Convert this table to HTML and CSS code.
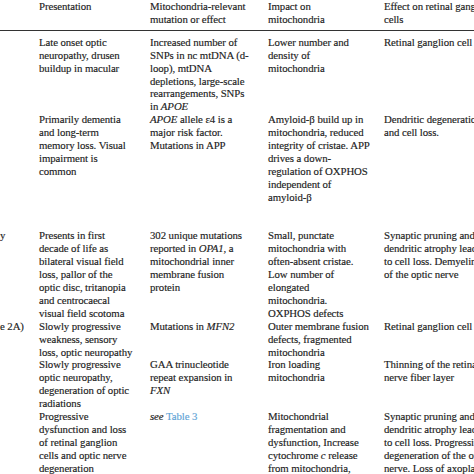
FILE: index.html
```html
<!DOCTYPE html>
<html lang="en">
<head>
<meta charset="utf-8">
<title>Table</title>
<link rel="stylesheet" href="styles.css">
</head>
<body>
<div class="frame">
<table class="tbl">
  <colgroup>
    <col class="c1"><col class="c2"><col class="c3"><col class="c4"><col class="c5">
  </colgroup>
  <thead>
    <tr>
      <th></th>
      <th>Presentation</th>
      <th>Mitochondria-relevant<br>mutation or effect</th>
      <th>Impact on<br>mitochondria</th>
      <th>Effect on retinal ganglion<br>cells</th>
    </tr>
  </thead>
  <tbody>
    <tr class="first">
      <td></td>
      <td>Late onset optic<br>neuropathy, drusen<br>buildup in macular</td>
      <td>Increased number of<br>SNPs in nc mtDNA (d-<br>loop), mtDNA<br>depletions, large-scale<br>rearrangements, SNPs<br>in <i>APOE</i></td>
      <td>Lower number and<br>density of<br>mitochondria</td>
      <td>Retinal ganglion cell loss</td>
    </tr>
    <tr class="gap">
      <td></td>
      <td>Primarily dementia<br>and long-term<br>memory loss. Visual<br>impairment is<br>common</td>
      <td><i>APOE</i> allele ε4 is a<br>major risk factor.<br>Mutations in APP</td>
      <td>Amyloid-β build up in<br>mitochondria, reduced<br>integrity of cristae. APP<br>drives a down-<br>regulation of OXPHOS<br>independent of<br>amyloid-β</td>
      <td>Dendritic degeneration<br>and cell loss.</td>
    </tr>
    <tr>
      <td class="cut">y</td>
      <td>Presents in first<br>decade of life as<br>bilateral visual field<br>loss, pallor of the<br>optic disc, tritanopia<br>and centrocaecal<br>visual field scotoma</td>
      <td>302 unique mutations<br>reported in <i>OPA1</i>, a<br>mitochondrial inner<br>membrane fusion<br>protein</td>
      <td>Small, punctate<br>mitochondria with<br>often-absent cristae.<br>Low number of<br>elongated<br>mitochondria.<br>OXPHOS defects</td>
      <td>Synaptic pruning and<br>dendritic atrophy leads<br>to cell loss. Demyelination<br>of the optic nerve</td>
    </tr>
    <tr>
      <td class="cut">e 2A)</td>
      <td>Slowly progressive<br>weakness, sensory<br>loss, optic neuropathy</td>
      <td>Mutations in <i>MFN2</i></td>
      <td>Outer membrane fusion<br>defects, fragmented<br>mitochondria</td>
      <td>Retinal ganglion cell loss</td>
    </tr>
    <tr>
      <td></td>
      <td>Slowly progressive<br>optic neuropathy,<br>degeneration of optic<br>radiations</td>
      <td>GAA trinucleotide<br>repeat expansion in<br><i>FXN</i></td>
      <td>Iron loading<br>mitochondria</td>
      <td>Thinning of the retinal<br>nerve fiber layer</td>
    </tr>
    <tr>
      <td></td>
      <td>Progressive<br>dysfunction and loss<br>of retinal ganglion<br>cells and optic nerve<br>degeneration</td>
      <td><i>see</i> <a class="ref" href="#">Table 3</a></td>
      <td>Mitochondrial<br>fragmentation and<br>dysfunction, Increase<br>cytochrome <i>c</i> release<br>from mitochondria,</td>
      <td>Synaptic pruning and<br>dendritic atrophy leads<br>to cell loss. Progressive<br>degeneration of the optic<br>nerve. Loss of axoplasmic</td>
    </tr>
  </tbody>
</table>
</div>
</body>
</html>
```
FILE: styles.css
```css
html, body {
  margin: 0;
  padding: 0;
  background: #ffffff;
}
.frame {
  width: 474px;
  height: 474px;
  overflow: hidden;
}
.tbl {
  table-layout: fixed;
  border-collapse: collapse;
  width: 600px;
  font-family: "Liberation Serif", "Times New Roman", serif;
  font-size: 10.8px;
  letter-spacing: -0.08px;
  line-height: 12.9px;
  color: #1c1c1c;
  -webkit-text-stroke: 0.15px #1c1c1c;
}
.c1 { width: 39px; }
.c2 { width: 111px; }
.c3 { width: 118px; }
.c4 { width: 116px; }
.c5 { width: 216px; }
.tbl th,
.tbl td {
  padding: 0;
  text-align: left;
  vertical-align: top;
  white-space: nowrap;
  overflow: visible;
  font-weight: normal;
}
.tbl thead th {
  padding-bottom: 4.5px;
  border-bottom: 1.3px solid #333333;
}
.tbl tr.first td {
  padding-top: 4.5px;
}
.tbl tr.gap td {
  padding-bottom: 25.8px;
}
.tbl td.cut {
  padding-left: 0;
}
.ref {
  color: #5ea3d6;
  -webkit-text-stroke: 0.15px #5ea3d6;
  text-decoration: none;
}
```
